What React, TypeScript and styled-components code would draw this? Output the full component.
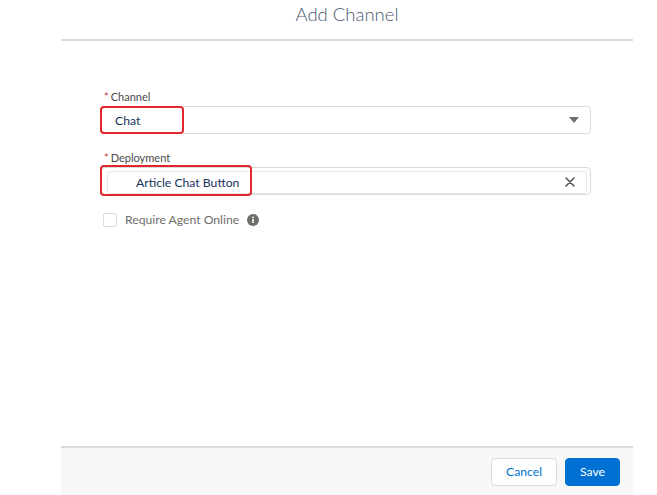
import React from "react";
import styled, { createGlobalStyle } from "styled-components";

const Global = createGlobalStyle`
  html, body { margin: 0; padding: 0; background: #ffffff; }
  body { font-family: Lato, "Open Sans", "Liberation Sans", sans-serif; }
  * { box-sizing: border-box; }
`;

const Modal = styled.div`
  width: 572px;
  margin-left: 61px;
  height: 495px;
  display: flex;
  flex-direction: column;
`;

const Header = styled.div`
  height: 41px;
  border-bottom: 2px solid #dddbda;
  display: flex;
  align-items: flex-start;
  justify-content: center;
  padding-top: 3px;
`;

const Title = styled.h2`
  margin: 0;
  font-size: 18.5px;
  font-weight: 300;
  color: #4a5870;
  line-height: 22px;
`;

const Body = styled.div`
  flex: 1;
  padding: 47px 42px 0 40px;
  display: flex;
  flex-direction: column;
`;

const Field = styled.div<{ $gap?: number }>`
  display: flex;
  flex-direction: column;
  margin-bottom: ${(p) => p.$gap ?? 0}px;
`;

const Label = styled.label`
  font-size: 11px;
  color: #4a4a48;
  line-height: 18px;
  padding-left: 3px;
  display: flex;
  align-items: center;
`;

const Req = styled.abbr`
  color: #c23934;
  text-decoration: none;
  margin-right: 2px;
  font-size: 11px;
`;

const Control = styled.div`
  position: relative;
  height: 28px;
  border: 1px solid #dddbda;
  border-radius: 4px;
  background: #fff;
  display: flex;
  align-items: center;
`;

const SelectText = styled.span`
  flex: 1;
  padding-left: 13px;
  font-size: 12.2px;
  color: #16325c;
`;

const InnerInput = styled.div`
  position: relative;
  flex: 1;
  margin: 2px 3px 0 5px;
  height: 23px;
  border: 1px solid #e8e8e8;
  border-radius: 3px;
  display: flex;
  align-items: center;
`;

const InputText = styled.span`
  flex: 1;
  padding-left: 28px;
  font-size: 12.2px;
  color: #16325c;
`;

const IconBtn = styled.span`
  width: 24px;
  height: 24px;
  display: flex;
  align-items: center;
  justify-content: center;
  margin-right: 4px;
`;

const Highlight = styled.div<{ $l: number; $t: number; $w: number; $h: number }>`
  position: absolute;
  left: ${(p) => p.$l}px;
  top: ${(p) => p.$t}px;
  width: ${(p) => p.$w}px;
  height: ${(p) => p.$h}px;
  border: 2px solid #e3262e;
  border-radius: 4px;
  pointer-events: none;
`;

const CheckRow = styled.div`
  display: flex;
  align-items: center;
  margin-top: 17px;
  padding-left: 2px;
`;

const Box = styled.span`
  width: 14px;
  height: 14px;
  border: 1px solid #dddbda;
  border-radius: 2px;
  background: #fff;
  margin-right: 8px;
`;

const CheckLabel = styled.span`
  font-size: 12.2px;
  color: #706e6b;
  margin-right: 8px;
`;

const Footer = styled.div`
  height: 49px;
  border-top: 2px solid #dddbda;
  background: #f8f8f8;
  display: flex;
  align-items: center;
  justify-content: flex-end;
  padding-right: 13px;
  gap: 8px;
`;

const Button = styled.button<{ $brand?: boolean }>`
  height: 28px;
  width: ${(p) => (p.$brand ? 55 : 66)}px;
  padding: 0;
  border-radius: 4px;
  font-family: inherit;
  font-size: 12.2px;
  border: 1px solid ${(p) => (p.$brand ? "#0070d2" : "#dddbda")};
  background: ${(p) => (p.$brand ? "#0070d2" : "#ffffff")};
  color: ${(p) => (p.$brand ? "#ffffff" : "#0070d2")};
  cursor: pointer;
`;

export default function App() {
  return (
    <>
      <Global />
      <Modal>
        <Header>
          <Title>Add Channel</Title>
        </Header>
        <Body>
          <Field $gap={15}>
            <Label>
              <Req>*</Req>Channel
            </Label>
            <Control>
              <SelectText>Chat</SelectText>
              <IconBtn>
                <svg width="10" height="6" viewBox="0 0 10 6">
                  <path d="M0 0 L10 0 L5 6 Z" fill="#706e6b" />
                </svg>
              </IconBtn>
              <Highlight $l={-2} $t={-1} $w={84} $h={28} />
            </Control>
          </Field>
          <Field>
            <Label>
              <Req>*</Req>Deployment
            </Label>
            <Control>
              <InnerInput>
                <InputText>Article Chat Button</InputText>
                <IconBtn>
                  <svg width="10" height="10" viewBox="0 0 10 10">
                    <path d="M1 1 L9 9 M9 1 L1 9" stroke="#545454" strokeWidth="1.6" strokeLinecap="round" />
                  </svg>
                </IconBtn>
              </InnerInput>
              <Highlight $l={-2} $t={-3} $w={152} $h={31} />
            </Control>
          </Field>
          <CheckRow>
            <Box />
            <CheckLabel>Require Agent Online</CheckLabel>
            <svg width="12" height="12" viewBox="0 0 12 12">
              <circle cx="6" cy="6" r="6" fill="#706e6b" />
              <rect x="5.2" y="5" width="1.6" height="4" fill="#fff" />
              <circle cx="6" cy="3.4" r="0.9" fill="#fff" />
            </svg>
          </CheckRow>
        </Body>
        <Footer>
          <Button>Cancel</Button>
          <Button $brand>Save</Button>
        </Footer>
      </Modal>
    </>
  );
}
